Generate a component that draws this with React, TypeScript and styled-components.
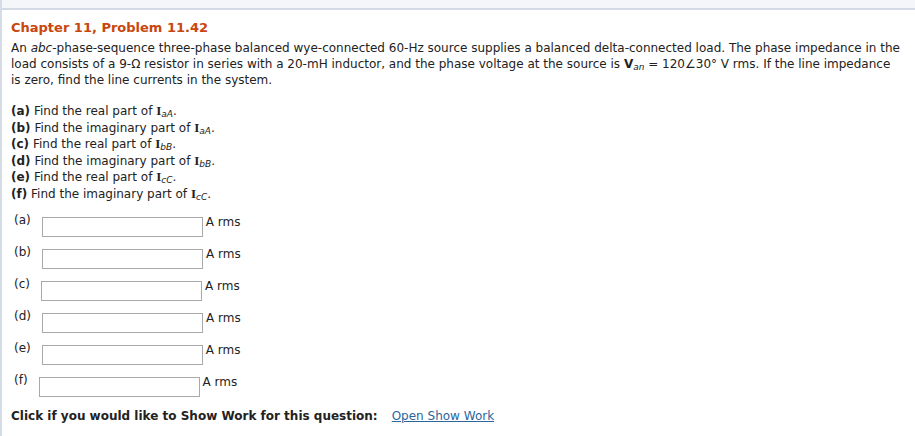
import React from "react";
import styled, { createGlobalStyle } from "styled-components";

const GlobalStyle = createGlobalStyle`
  html, body { margin: 0; padding: 0; background: #ffffff; }
  body { font-family: "DejaVu Sans", Verdana, sans-serif; font-size: 12px; color: #222; }
`;

const Page = styled.div`
  min-height: 436px;
  border-left: 2px solid #d6dce6;
  box-sizing: border-box;
`;

const TopStrip = styled.div`
  height: 8px;
  background: #f4f6fa;
  border-bottom: 2px solid #d3dae5;
`;

const Content = styled.div`
  padding: 9px 9px 0 9px;
`;

const Title = styled.h2`
  margin: 0 0 4px 0;
  font-size: 13px;
  font-weight: bold;
  color: #c8460c;
  line-height: 17px;
`;

const Para = styled.p`
  margin: 0 0 15px 0;
  line-height: 16px;
  white-space: nowrap;
`;

const PartList = styled.div`
  display: flex;
  flex-direction: column;
  margin-bottom: 14px;
`;

const PartLine = styled.div`
  line-height: 16.6px;
  height: 16.6px;
`;

const PartTag = styled.b``;

const BoldI = styled.b`
  font-family: "Liberation Serif", "Times New Roman", serif;
  font-size: 13px;
`;

const Sub = styled.sub`
  font-style: italic;
  font-size: 9px;
  vertical-align: -2px;
  line-height: 0;
`;

const BoldV = styled.b``;

const Rows = styled.div`
  display: flex;
  flex-direction: column;
  gap: 12px;
`;

const Row = styled.div`
  display: flex;
  align-items: flex-start;
  height: 20px;
  padding-left: 3px;
`;

const RowLabel = styled.span`
  line-height: 14px;
  margin-top: -4px;
  margin-right: 11px;
`;

const Field = styled.input`
  box-sizing: border-box;
  width: 161px;
  height: 20px;
  margin: 0;
  border: 1px solid #a9a9a9;
  padding: 0 2px;
  font-family: inherit;
  font-size: 12px;
`;

const Unit = styled.span`
  line-height: 14px;
  margin-top: -2px;
  margin-left: 3px;
`;

const Footer = styled.div`
  margin-top: 12px;
  display: flex;
  align-items: baseline;
  gap: 14px;
`;

const FooterText = styled.b``;

const Link = styled.a`
  color: #2b65a0;
  text-decoration: underline;
`;

const parts = [
  { tag: "(a)", text: "Find the real part of ", sub: "aA" },
  { tag: "(b)", text: "Find the imaginary part of ", sub: "aA" },
  { tag: "(c)", text: "Find the real part of ", sub: "bB" },
  { tag: "(d)", text: "Find the imaginary part of ", sub: "bB" },
  { tag: "(e)", text: "Find the real part of ", sub: "cC" },
  { tag: "(f)", text: "Find the imaginary part of ", sub: "cC" },
];

export default function App() {
  return (
    <>
      <GlobalStyle />
      <Page>
        <TopStrip />
        <Content>
          <Title>Chapter 11, Problem 11.42</Title>
          <Para>
            An <i>abc</i>-phase-sequence three-phase balanced wye-connected 60-Hz source supplies a balanced delta-connected load. The phase impedance in the
            <br />
            load consists of a 9-Ω resistor in series with a 20-mH inductor, and the phase voltage at the source is <BoldV>V</BoldV>
            <Sub>an</Sub> = 120∠30° V rms. If the line impedance
            <br />
            is zero, find the line currents in the system.
          </Para>
          <PartList>
            {parts.map((p) => (
              <PartLine key={p.tag}>
                <PartTag>{p.tag}</PartTag> {p.text}
                <BoldI>I</BoldI>
                <Sub>{p.sub}</Sub>.
              </PartLine>
            ))}
          </PartList>
          <Rows>
            {["(a)", "(b)", "(c)", "(d)", "(e)", "(f)"].map((l) => (
              <Row key={l}>
                <RowLabel>{l}</RowLabel>
                <Field type="text" />
                <Unit>A rms</Unit>
              </Row>
            ))}
          </Rows>
          <Footer>
            <FooterText>Click if you would like to Show Work for this question:</FooterText>
            <Link href="#">Open Show Work</Link>
          </Footer>
        </Content>
      </Page>
    </>
  );
}
